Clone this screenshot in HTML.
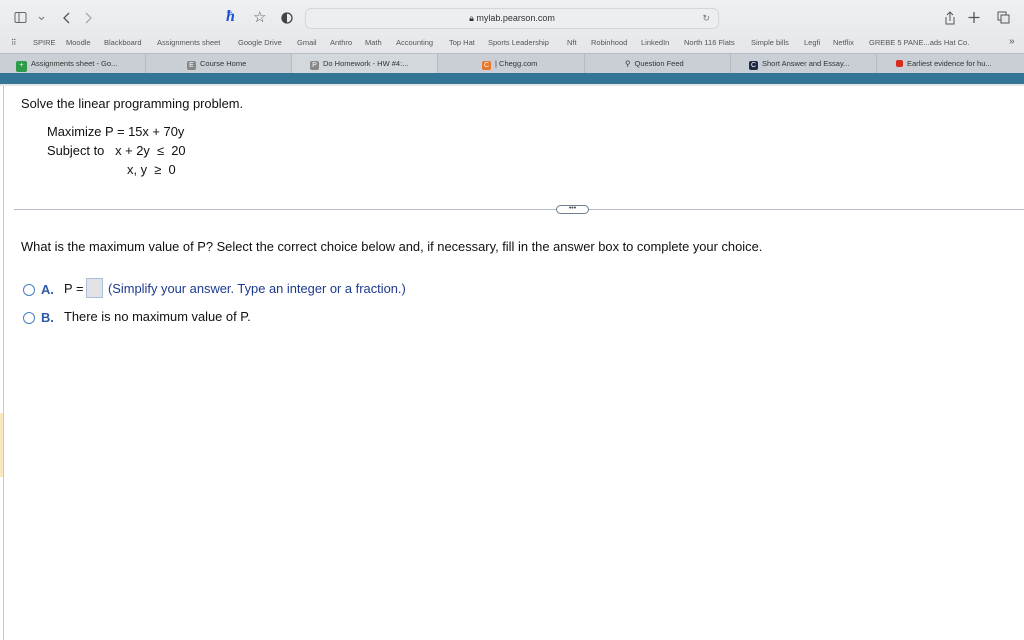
<!DOCTYPE html>
<html><head><style>
*{margin:0;padding:0;box-sizing:border-box}
body{width:1024px;height:640px;overflow:hidden;background:#fff;font-family:"Liberation Sans",Arial,sans-serif;position:relative}
.top{position:absolute;left:0;top:0;width:1024px;height:53px;background:linear-gradient(#eef0f2,#e4e6e9)}
.url{position:absolute;left:305px;top:8px;width:414px;height:21px;border:1px solid #d4d6da;border-radius:6px;background:#eceef1;font-size:9px;color:#333;text-align:center;line-height:19px}
.bm{position:absolute;top:38px;font-size:7.5px;color:#555;white-space:nowrap}
.tabs{position:absolute;left:0;top:53px;width:1024px;height:20px;background:#c9cfd5;border-top:1px solid #b9bec4}
.tab{position:absolute;top:0;height:19px;width:146px;border-right:1px solid #b5bbc1;font-size:7.5px;color:#333;line-height:19px;white-space:nowrap}
.ic{display:inline-block;width:9px;height:9px;border-radius:2px;vertical-align:-1px;margin-right:4px;color:#fff;font-size:7px;line-height:9px;text-align:center}
.blue{position:absolute;left:0;top:73px;width:1024px;height:11px;background:#327594}
.t{position:absolute;font-size:12.9px;color:#111;white-space:nowrap}
.radio{position:absolute;width:12px;height:12px;border:1.3px solid #4a7fc1;border-radius:50%}
</style></head><body>
<div class="top">
<svg style="position:absolute;left:14px;top:11px" width="34" height="14"><rect x="1" y="1.5" width="11" height="10" rx="1.5" fill="none" stroke="#666"/><line x1="5" y1="2" x2="5" y2="11" stroke="#666"/><path d="M25 6l2.5 2.5L30 6" fill="none" stroke="#777"/></svg>
<svg style="position:absolute;left:60px;top:11px" width="40" height="14"><path d="M9 2L4 7l5 5" fill="none" stroke="#555" stroke-width="1.3"/><path d="M26 2l5 5-5 5" fill="none" stroke="#aaa" stroke-width="1.3"/></svg>
<div style="position:absolute;left:226px;top:8px;font-size:16px;color:#1a4fd6;font-weight:bold;font-family:'Liberation Serif',serif;font-style:italic">ħ</div>
<div style="position:absolute;left:253px;top:8px;font-size:15px;color:#555">☆</div>
<svg style="position:absolute;left:281px;top:12px" width="12" height="12"><circle cx="6" cy="6" r="5" fill="none" stroke="#444" stroke-width="1.3"/><path d="M6 1a5 5 0 0 0 0 10z" fill="#444"/></svg>
<div class="url">🔒︎ mylab.pearson.com<span style="position:absolute;right:8px;color:#777">↻</span></div>
<svg style="position:absolute;left:944px;top:9px" width="72" height="16"><path d="M6 4v8M3 6l3-3 3 3M2 8v7h8V8" fill="none" stroke="#555"/><path d="M30 3v11M24.5 8.5h11" stroke="#555" stroke-width="1.3"/><rect x="54" y="3" width="8" height="8" fill="none" stroke="#555"/><rect x="57" y="6" width="8" height="8" fill="#e6e8eb" stroke="#555"/></svg>
<div class="bm" style="left:11px">⠿</div>
<div class="bm" style="left:33px">SPIRE</div><div class="bm" style="left:66px">Moodle</div><div class="bm" style="left:104px">Blackboard</div><div class="bm" style="left:157px">Assignments sheet</div><div class="bm" style="left:238px">Google Drive</div><div class="bm" style="left:297px">Gmail</div><div class="bm" style="left:330px">Anthro</div><div class="bm" style="left:365px">Math</div><div class="bm" style="left:396px">Accounting</div><div class="bm" style="left:449px">Top Hat</div><div class="bm" style="left:488px">Sports Leadership</div><div class="bm" style="left:567px">Nft</div><div class="bm" style="left:591px">Robinhood</div><div class="bm" style="left:641px">LinkedIn</div><div class="bm" style="left:684px">North 116 Flats</div><div class="bm" style="left:751px">Simple bills</div><div class="bm" style="left:804px">Legfi</div><div class="bm" style="left:833px">Netflix</div><div class="bm" style="left:869px">GREBE 5 PANE...ads Hat Co.</div><div class="bm" style="left:1009px;font-size:10px;top:36px">»</div>
</div>
<div class="tabs">
<div class="tab" style="left:0;padding-left:16px"><span class="ic" style="background:#2e9a4a;width:11px;height:11px">+</span>Assignments sheet - Go...</div>
<div class="tab" style="left:146px;padding-left:41px"><span class="ic" style="background:#888">E</span>Course Home</div>
<div class="tab" style="left:292px;padding-left:18px;background:#d3d8dd"><span class="ic" style="background:#888">P</span>Do Homework - HW #4:...</div>
<div class="tab" style="left:439px;padding-left:43px"><span class="ic" style="background:#e8762b">C</span>| Chegg.com</div>
<div class="tab" style="left:585px;padding-left:40px"><span style="margin-right:4px">⚲</span>Question Feed</div>
<div class="tab" style="left:731px;padding-left:18px"><span class="ic" style="background:#1d2a44">C</span>Short Answer and Essay...</div>
<div class="tab" style="left:878px;padding-left:18px;border:none"><span class="ic" style="background:#d92a1c;width:7px;height:7px"></span>Earliest evidence for hu...</div>
</div>
<div class="blue"></div>
<div style="position:absolute;left:0;top:84px;width:1024px;height:2px;background:#e4e7ea"></div>
<div style="position:absolute;left:3px;top:86px;width:1px;height:554px;background:#c8c8cc"></div>
<div style="position:absolute;left:0;top:413px;width:3px;height:64px;background:#f7e8c0"></div>
<div class="t" style="left:21px;top:96px">Solve the linear programming problem.</div>
<div class="t" style="left:47px;top:124px">Maximize P = 15x + 70y</div>
<div class="t" style="left:47px;top:143px">Subject to&nbsp;&nbsp; x + 2y &nbsp;≤&nbsp; 20</div>
<div class="t" style="left:127px;top:162px">x, y &nbsp;≥&nbsp; 0</div>
<div style="position:absolute;left:14px;top:209px;width:1010px;height:1px;background:#b5bcc6"></div>
<div style="position:absolute;left:556px;top:205px;width:33px;height:9px;border:1px solid #6f7d8f;border-radius:5px;background:#fff;font-size:7px;line-height:5px;text-align:center;color:#444">•••</div>
<div class="t" style="left:21px;top:239px">What is the maximum value of P? Select the correct choice below and, if necessary, fill in the answer box to complete your choice.</div>
<div class="radio" style="left:23px;top:284px"></div>
<div class="t" style="left:41px;top:282px;color:#2c5aa8;font-weight:bold">A.</div>
<div class="t" style="left:64px;top:281px">P =</div>
<div style="position:absolute;left:86px;top:278px;width:17px;height:20px;background:#e3e3e3;border:1px solid #a9c0dc"></div>
<div class="t" style="left:108px;top:281px;color:#1d3a8f">(Simplify your answer. Type an integer or a fraction.)</div>
<div class="radio" style="left:23px;top:312px"></div>
<div class="t" style="left:41px;top:310px;color:#2c5aa8;font-weight:bold">B.</div>
<div class="t" style="left:64px;top:309px">There is no maximum value of P.</div>
</body></html>
